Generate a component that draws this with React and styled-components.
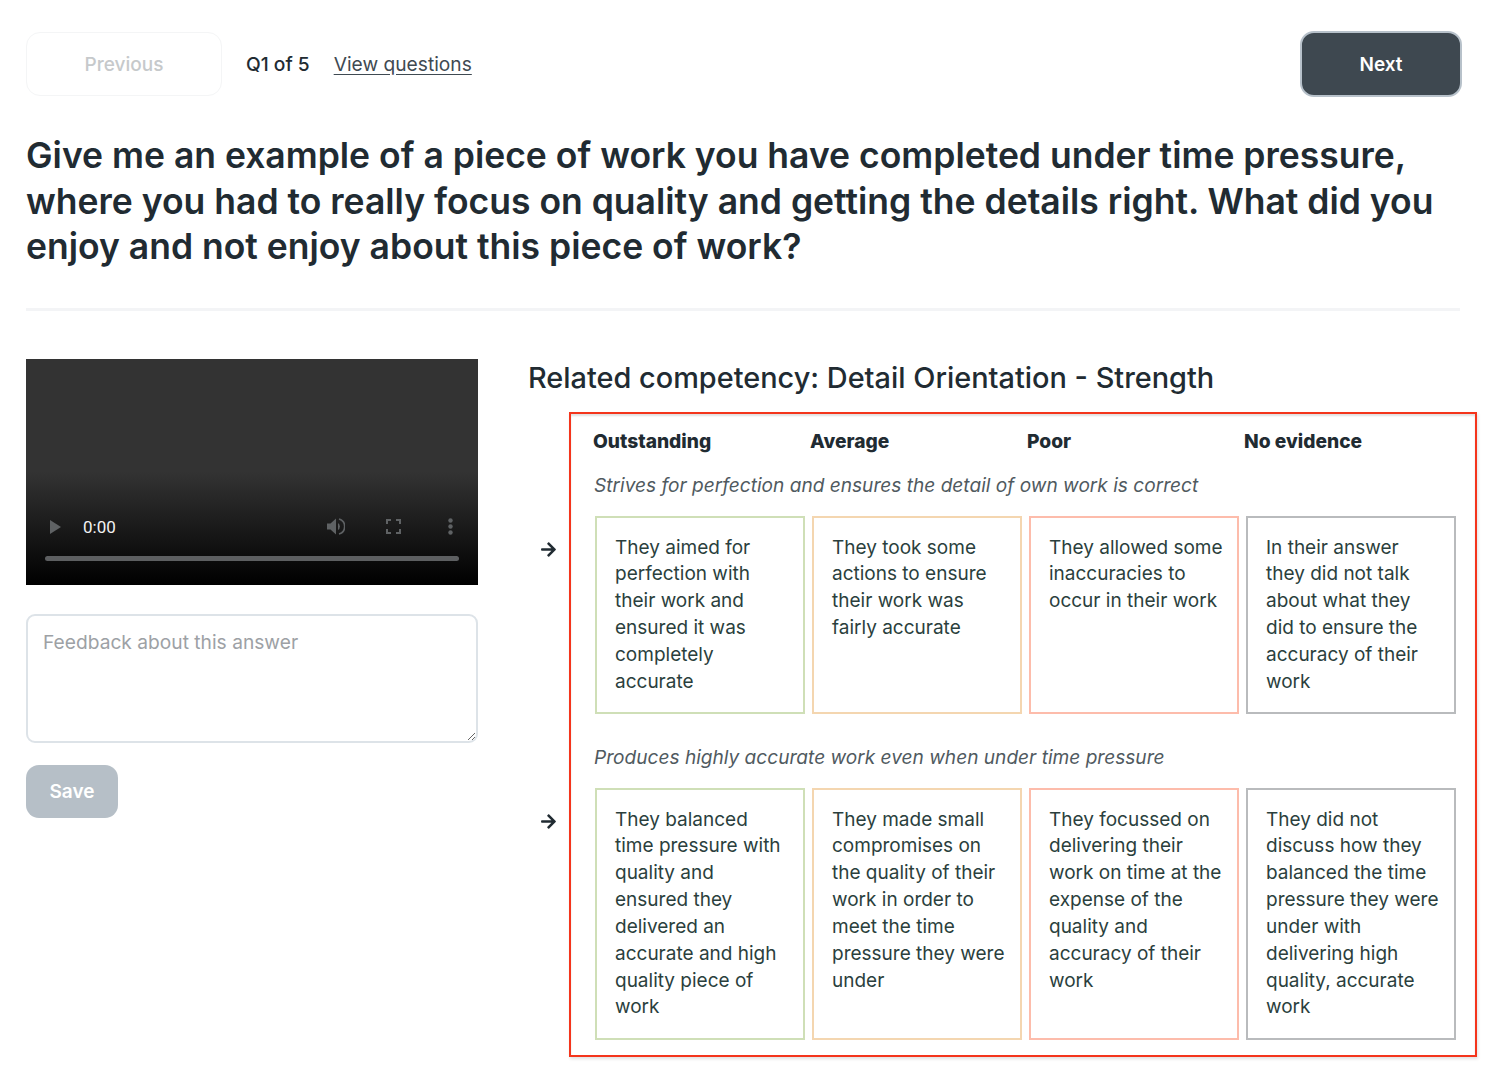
import React from 'react';
import styled, { createGlobalStyle } from 'styled-components';
import { FaArrowRight } from 'react-icons/fa';

const GlobalStyle = createGlobalStyle`
  html, body {
    margin: 0;
    padding: 0;
    background: #fff;
    font-family: 'Inter', 'Liberation Sans', sans-serif;
    color: #212b32;
  }
  * { box-sizing: border-box; }
`;

const Page = styled.div`
  width: 1500px;
  height: 1068px;
  padding: 31px 38px 0 26px;
  overflow: hidden;
`;

const Toolbar = styled.div`
  display: flex;
  align-items: center;
  height: 66px;
`;

const PrevButton = styled.button`
  width: 196px;
  height: 64px;
  border: 1px solid #f4f5f6;
  border-radius: 14px;
  background: #fff;
  color: #c6c9cb;
  font: 500 19px 'Inter', sans-serif;
`;

const Counter = styled.span`
  margin-left: 24px;
  font-size: 19.2px;
  font-weight: 500;
  color: #212b32;
`;

const QuestionsLink = styled.a`
  margin-left: 24px;
  font-size: 19.2px;
  color: #3f4a52;
  text-decoration: underline;
  text-underline-offset: 3px;
`;

const NextButton = styled.button`
  margin-left: auto;
  width: 162px;
  height: 66px;
  border: 2px solid #b7c1ca;
  border-radius: 14px;
  background: #3e4850;
  color: #fff;
  font: 600 19px 'Inter', sans-serif;
`;

const Question = styled.h1`
  margin: 36px 0 0;
  font-size: 35.5px;
  line-height: 45.5px;
  font-weight: 600;
  color: #212b32;
`;

const Divider = styled.hr`
  margin: 38px 2px 0 0;
  border: 0;
  height: 3px;
  background: #f3f4f6;
`;

const Columns = styled.div`
  display: flex;
  gap: 50px;
  margin-top: 48px;
`;

const LeftColumn = styled.div`
  flex: 0 0 452px;
  display: flex;
  flex-direction: column;
  align-items: flex-start;
`;

const Player = styled.div`
  width: 452px;
  height: 226px;
  display: flex;
  flex-direction: column;
  justify-content: flex-end;
  background: linear-gradient(#333 0, #333 50%, #000 100%);
  padding: 0 19px 24px 19px;
`;

const PlayerControls = styled.div`
  display: flex;
  align-items: center;
  height: 20px;
  padding-left: 5px;
  color: #5f6264;
`;

const Time = styled.span`
  flex: 0 0 32px;
  margin-left: 22px;
  font: 400 17px 'Roboto', 'Inter', sans-serif;
  color: #f2f2f2;
`;

const ControlIcon = styled.svg`
  display: block;
  flex: none;
  margin-left: ${p => p.$gap || 0}px;
`;

const Timeline = styled.div`
  height: 5px;
  margin-top: 19px;
  border-radius: 3px;
  background: #5d5f61;
`;

const FeedbackWrap = styled.div`
  position: relative;
  width: 452px;
  height: 129px;
  margin-top: 29px;
`;

const Feedback = styled.textarea`
  display: block;
  width: 100%;
  height: 100%;
  padding: 12px 15px;
  border: 2px solid #dde3e8;
  border-radius: 9px;
  outline: none;
  font: 400 19.2px/28px 'Inter', sans-serif;
  color: #212b32;
  resize: both;

  &::placeholder {
    color: #9da1a5;
    opacity: 1;
  }
`;

const SaveButton = styled.button`
  width: 92px;
  height: 53px;
  margin-top: 22px;
  border: 0;
  border-radius: 13px;
  background: #b6bfc7;
  color: #fff;
  font: 600 19px 'Inter', sans-serif;
`;

const RightColumn = styled.div`
  flex: 1;
  min-width: 0;
`;

const CompetencyTitle = styled.h2`
  margin: 0;
  font-size: 28.9px;
  line-height: 38px;
  font-weight: 500;
  color: #212b32;
`;

const Panel = styled.div`
  width: 908px;
  height: 645px;
  margin: 15px 0 0 41px;
  padding: 12px 20px 0 24px;
  border: 2px solid #f4351c;
  box-shadow: 1px 2px 3px rgba(0, 0, 0, 0.12), inset 0 2px 2px rgba(0, 0, 0, 0.12);
`;

const ScaleHeader = styled.div`
  display: grid;
  grid-template-columns: repeat(4, 210px);
  column-gap: 7px;
  height: 30px;
  align-items: center;
`;

const ScaleLabel = styled.div`
  font-size: 19.2px;
  font-weight: 800;
  color: #212b32;
  margin-left: -2px;
`;

const Criterion = styled.div`
  position: relative;
  margin-top: ${p => p.$top}px;
`;

const CriterionTitle = styled.div`
  font-size: 19.1px;
  line-height: 28px;
  font-style: italic;
  color: #505a5f;
  margin-left: -1px;
`;

const ArrowMark = styled.span`
  position: absolute;
  left: -55px;
  top: 70px;
  display: flex;
  font-size: 17px;
  color: #212b32;
`;

const CardRow = styled.div`
  display: grid;
  grid-template-columns: repeat(4, 210px);
  column-gap: 7px;
  margin-top: 17px;
  height: ${p => p.$height}px;
`;

const Card = styled.div`
  border: 2px solid ${p => p.$color};
  padding: 17px 14px 0 18px;
  font-size: 19px;
  line-height: 26.85px;
  color: #2b3f3d;
`;

const borders = ['#cfdfb7', '#f4d6b0', '#fdbcab', '#b9bbbd'];
const scale = ['Outstanding', 'Average', 'Poor', 'No evidence'];

const criteria = [
  {
    title: 'Strives for perfection and ensures the detail of own work is correct',
    top: 15,
    height: 198,
    cards: [
      'They aimed for perfection with their work and ensured it was completely accurate',
      'They took some actions to ensure their work was fairly accurate',
      'They allowed some inaccuracies to occur in their work',
      'In their answer they did not talk about what they did to ensure the accuracy of their work',
    ],
  },
  {
    title: 'Produces highly accurate work even when under time pressure',
    top: 29,
    height: 252,
    cards: [
      'They balanced time pressure with quality and ensured they delivered an accurate and high quality piece of work',
      'They made small compromises on the quality of their work in order to meet the time pressure they were under',
      'They focussed on delivering their work on time at the expense of the quality and accuracy of their work',
      'They did not discuss how they balanced the time pressure they were under with delivering high quality, accurate work',
    ],
  },
];

const App = () => {
  return (
    <Page>
      <GlobalStyle />
      <Toolbar>
        <PrevButton>Previous</PrevButton>
        <Counter>Q1 of 5</Counter>
        <QuestionsLink>View questions</QuestionsLink>
        <NextButton>Next</NextButton>
      </Toolbar>

      <Question>
        Give me an example of a piece of work you have completed under time pressure, where you had to really focus on quality and getting the details right. What did you enjoy and not enjoy about this piece of work?
      </Question>
      <Divider />

      <Columns>
        <LeftColumn>
          <Player>
            <PlayerControls>
              <ControlIcon width="11" height="14" viewBox="0 0 11 14">
                <path d="M0 0 L11 7 L0 14 Z" fill="currentColor" />
              </ControlIcon>
              <Time>0:00</Time>
              <ControlIcon $gap={211} width="18" height="19" viewBox="0 0 18 19">
                <path d="M0 6.5 H3.5 L9 1.5 V17.5 L3.5 12.5 H0 Z" fill="currentColor" />
                <path d="M11 6 A4.2 4.2 0 0 1 11 13 Z" fill="currentColor" />
                <path d="M12 2 A7.8 7.8 0 0 1 12 17" fill="none" stroke="currentColor" strokeWidth="1.6" />
              </ControlIcon>
              <ControlIcon $gap={41} width="15" height="15" viewBox="0 0 15 15">
                <path d="M1 5 V1 H5 M10 1 H14 V5 M14 10 V14 H10 M5 14 H1 V10" fill="none" stroke="currentColor" strokeWidth="2" />
              </ControlIcon>
              <ControlIcon $gap={47} width="5" height="17" viewBox="0 0 5 17">
                <circle cx="2.5" cy="2.5" r="2.2" fill="currentColor" />
                <circle cx="2.5" cy="8.5" r="2.2" fill="currentColor" />
                <circle cx="2.5" cy="14.5" r="2.2" fill="currentColor" />
              </ControlIcon>
            </PlayerControls>
            <Timeline />
          </Player>
          <FeedbackWrap>
            <Feedback placeholder="Feedback about this answer" />
          </FeedbackWrap>
          <SaveButton>Save</SaveButton>
        </LeftColumn>

        <RightColumn>
          <CompetencyTitle>Related competency: Detail Orientation - Strength</CompetencyTitle>
          <Panel>
            <ScaleHeader>
              {scale.map(label => (
                <ScaleLabel key={label}>{label}</ScaleLabel>
              ))}
            </ScaleHeader>
            {criteria.map(item => (
              <Criterion key={item.title} $top={item.top}>
                <CriterionTitle>{item.title}</CriterionTitle>
                <ArrowMark><FaArrowRight /></ArrowMark>
                <CardRow $height={item.height}>
                  {item.cards.map((text, i) => (
                    <Card key={text} $color={borders[i]}>{text}</Card>
                  ))}
                </CardRow>
              </Criterion>
            ))}
          </Panel>
        </RightColumn>
      </Columns>
    </Page>
  );
};

export default App;
